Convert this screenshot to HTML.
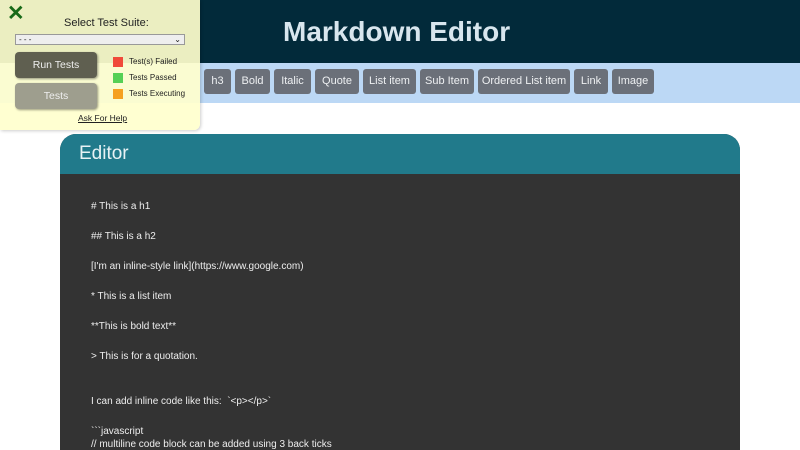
<!DOCTYPE html>
<html><head><meta charset="utf-8"><style>
*{box-sizing:border-box;margin:0;padding:0}
html,body{width:800px;height:450px;overflow:hidden}
body{background:#fff;font-family:"Liberation Sans",sans-serif;position:relative}
.hdr{position:absolute;left:0;top:0;width:800px;height:63px;background:#022a3a;color:#d8e6ee;font-weight:bold;font-size:28px;line-height:63px}
.hdr span{position:absolute;left:283px;top:0}
.bar{position:absolute;left:0;top:63px;width:800px;height:40px;background:#bcd8f5}
.b{position:absolute;top:6px;height:25px;background:#6b7079;color:#eef0f2;font-size:11px;line-height:25px;text-align:center;border-radius:3px}
.ed{position:absolute;left:60px;top:134px;width:680px;height:316px;background:#333;border-radius:16px 16px 0 0;overflow:hidden}
.eh{height:40px;background:#217a8b;color:#e8f2f5;font-size:19px;line-height:40px;padding-left:19px}
.t{position:absolute;left:31px;color:#eee;font-size:10px;white-space:pre}
.ov{position:absolute;left:0;top:0;width:200px;height:130px;background:rgba(255,255,205,0.92);border-radius:0 0 6px 0;box-shadow:1px 1px 3px rgba(0,0,0,.2);font-size:10px;color:#222;z-index:5}
.btn{position:absolute;left:15px;width:82px;height:26px;border-radius:4px;color:#eee;font-size:10.5px;line-height:26px;text-align:center;box-shadow:1px 1px 2px rgba(0,0,0,.4)}
.sq{position:absolute;left:113px;width:10px;height:10px}
.lg{position:absolute;left:129px;font-size:8px}
</style></head><body>
<div class="hdr"><span>Markdown Editor</span></div>
<div class="bar">
<div class="b" style="left:204px;width:27px">h3</div>
<div class="b" style="left:235px;width:35px">Bold</div>
<div class="b" style="left:274px;width:37px">Italic</div>
<div class="b" style="left:315px;width:44px">Quote</div>
<div class="b" style="left:363px;width:53px">List item</div>
<div class="b" style="left:420px;width:54px">Sub Item</div>
<div class="b" style="left:478px;width:92px">Ordered List item</div>
<div class="b" style="left:574px;width:34px">Link</div>
<div class="b" style="left:612px;width:42px">Image</div>
</div>
<div class="ed"><div class="eh">Editor</div>
<div class="t" style="top:67px"># This is a h1</div>
<div class="t" style="top:97px">## This is a h2</div>
<div class="t" style="top:127px">[I'm an inline-style link](https://www.google.com)</div>
<div class="t" style="top:157px">* This is a list item</div>
<div class="t" style="top:187px">**This is bold text**</div>
<div class="t" style="top:217px">&gt; This is for a quotation.</div>
<div class="t" style="top:262px">I can add inline code like this:  &#96;&lt;p&gt;&lt;/p&gt;&#96;</div>
<div class="t" style="top:292px">&#96;&#96;&#96;javascript</div>
<div class="t" style="top:305px">// multiline code block can be added using 3 back ticks</div>
</div>
<div class="ov">
<div style="position:absolute;left:7px;top:1px;color:#186a18;font-size:21px;font-weight:bold">✕</div>
<div style="position:absolute;left:64px;top:17px;font-size:11px">Select Test Suite:</div>
<div style="position:absolute;left:15px;top:34px;width:170px;height:11px;background:#eee;border:1px solid #999;font-size:8px;line-height:9px;padding-left:3px">- - -<span style="position:absolute;right:3px;top:0">⌄</span></div>
<div class="btn" style="top:52px;background:#5f5f50">Run Tests</div>
<div class="btn" style="top:83px;background:#9e9e8e">Tests</div>
<div class="sq" style="top:57px;background:#f04a3a"></div><div class="lg" style="top:57px">Test(s) Failed</div>
<div class="sq" style="top:73px;background:#55d055"></div><div class="lg" style="top:73px">Tests Passed</div>
<div class="sq" style="top:89px;background:#f5a020"></div><div class="lg" style="top:89px">Tests Executing</div>
<div style="position:absolute;left:78px;top:113px;font-size:8.5px;text-decoration:underline">Ask For Help</div>
</div>
</body></html>
